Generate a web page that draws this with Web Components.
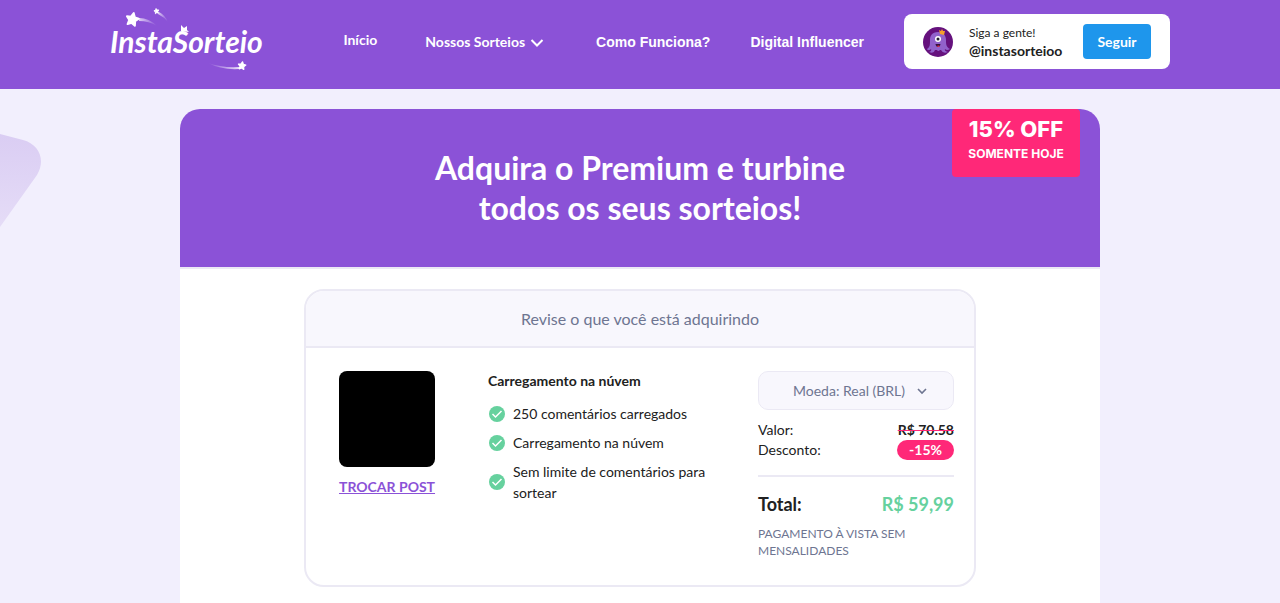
<!DOCTYPE html>
<html lang="pt-BR">
<head>
<meta charset="utf-8">
<meta name="viewport" content="width=device-width, initial-scale=1">
<title>InstaSorteio</title>
<style>
  body {
    margin: 0;
    background: #f2effd;
    font-family: Lato, sans-serif;
    color: #212121;
    --brand: #8b52d7;
    --pink: #ff2878;
    --green: #66d19e;
    --muted: #6e7591;
    --line: #ebe9f4;
    --soft: #f8f7fd;
  }
</style>
</head>
<body>
<insta-page>
  <site-header slot="header"></site-header>
  <premium-hero>
    <span slot="title">Adquira o Premium e turbine<br>todos os seus sorteios!</span>
    <offer-badge slot="badge"><span slot="value">15% OFF</span><span slot="note">SOMENTE HOJE</span></offer-badge>
  </premium-hero>
  <review-card>
    <span slot="title">Revise o que você está adquirindo</span>
    <post-thumb slot="content"></post-thumb>
    <feature-list slot="content">
      <span slot="title">Carregamento na núvem</span>
      <feature-item>250 comentários carregados</feature-item>
      <feature-item>Carregamento na núvem</feature-item>
      <feature-item>Sem limite de comentários para sortear</feature-item>
    </feature-list>
    <price-summary slot="content"></price-summary>
  </review-card>
</insta-page>

<script>
const define = (name, html) => customElements.define(name, class extends HTMLElement {
  constructor() {
    super();
    const template = document.createElement('template');
    template.innerHTML = html;
    this.attachShadow({ mode: 'open' }).append(template.content.cloneNode(true));
  }
});

define('insta-page', `
  <style>
    :host { display: block; position: relative; overflow: hidden; }
    .shape { position: absolute; left: 0; top: 130px; }
    main { position: relative; max-width: 920px; margin: 20px auto 0; background: #fff; border-radius: 20px 20px 0 0; padding-bottom: 32px; }
  </style>
  <slot name="header"></slot>
  <svg class="shape" width="44" height="100" viewBox="0 0 44 100" aria-hidden="true">
    <defs><linearGradient id="g" x1="0" y1="0" x2="0" y2="1"><stop stop-color="#dacdf3"/><stop offset="1" stop-color="#e5dcf7"/></linearGradient></defs>
    <path d="M0 4 L23 10 C39 14 46 30 37 45 L0 97Z" fill="url(#g)"/>
  </svg>
  <main><slot></slot></main>`);

define('site-header', `
  <style>
    :host { display: block; background: var(--brand); color: #fff; }
    header { max-width: 1060px; margin: 0 auto; padding: 14px 0 20px; display: flex; align-items: center; justify-content: space-between; }
    nav { flex: none; display: flex; align-items: center; gap: 40px; }
    a { color: inherit; text-decoration: none; font-size: 14px; line-height: 20px; font-weight: 700; white-space: nowrap; }
    .home { margin-right: 8px; padding-bottom: 4px; }
    .menu { margin-right: 12px; display: flex; align-items: center; gap: 5px; }
    .plain { font-family: "Liberation Sans", Arial, sans-serif; }
  </style>
  <header>
    <brand-logo></brand-logo>
    <nav>
      <a class="home" href="#">Início</a>
      <a class="menu" href="#">Nossos Sorteios
        <svg width="14" height="14" viewBox="0 0 14 14" fill="none" stroke="currentColor" stroke-width="2" aria-hidden="true"><path d="M1.500 5 7 10.500 12.500 5"/></svg></a>
      <a class="plain" href="#">Como Funciona?</a>
      <a class="plain" href="#">Digital Influencer</a>
      <follow-card></follow-card>
    </nav>
  </header>`);

define('brand-logo', `
  <style>
    :host { display: block; }
    a { display: grid; color: #fff; text-decoration: none; width: 152px; }
    svg, span { grid-area: 1 / 1; align-self: center; }
    span { font-size: 30px; line-height: 32px; padding-bottom: 2px; font-weight: 700; font-style: italic; }
    svg { overflow: visible; }
  </style>
  <a href="#">
    <svg width="152" height="55" viewBox="110 14 152 55" fill="#fff" aria-hidden="true">
      <defs>
        <linearGradient id="a" x1="0" x2="1"><stop stop-color="#fff" stop-opacity=".7"/><stop offset="1" stop-color="#fff" stop-opacity="0"/></linearGradient>
        <linearGradient id="b" x1="0" x2="1"><stop stop-color="#fff" stop-opacity="0"/><stop offset="1" stop-color="#fff" stop-opacity=".8"/></linearGradient>
        <path id="star" stroke="#fff" stroke-width="2" stroke-linejoin="round" d="M0-6 2-2 6-1.500 3 1.500 3.700 6 0 4-3.700 6-3 1.500-6-1.500-2-2Z"/>
      </defs>
      <path d="M139 18Q149 18 157 26Q149 21 139 21Z" fill="url(#a)"/>
      <path d="M159 12Q165 15 168 22Q164 17 158 14Z" fill="url(#a)"/>
      <path d="M208 63Q222 68 239 67L239 69Q221 70 208 63Z" fill="url(#b)"/>
      <use href="#star" transform="translate(132.500 19) rotate(12)"/>
      <use href="#star" transform="translate(156.500 11) rotate(-10) scale(.42)"/>
      <use href="#star" transform="translate(242 65.500) rotate(8) scale(.62)"/>
      <path d="M181 25 184 28 187 26 187 30 189 32 181 31Z"/>
    </svg>
    <span>InstaSorteio</span>
  </a>`);

define('follow-card', `
  <style>
    :host { display: flex; align-items: center; box-sizing: border-box; width: 266px; padding: 10px 19px; background: #fff; color: #212121; border-radius: 8px; }
    .who { margin-left: 16px; flex: 1; display: grid; }
    small { font-size: 12px; line-height: 18px; }
    b { font-size: 14px; line-height: 17px; }
    button { width: 68px; height: 35px; padding: 0; border: 0; border-radius: 4px; background: #1e96ec; color: #fff; font: 700 14px/20px Lato, sans-serif; }
  </style>
  <svg width="30" height="30" viewBox="0 0 30 30" aria-hidden="true">
    <circle cx="15" cy="15" r="15" fill="#65117d"/>
    <path d="M15 5C9 5 7 9 7 13C7 18 7 20 4 22C5 24 7 23 8 22Q9 24 6 25Q11 27 12 23L14 23Q15 25 17 23L18 23Q20 27 25 25Q21 24 22 22Q24 24 27 22C23 20 23 17 23 13C23 8 20 5 15 5Z" fill="#9162cb"/>
    <circle cx="15" cy="12" r="3" fill="#fff"/><circle cx="15" cy="12" r="1.500" fill="#223"/>
    <path d="M12.500 17H17.500Q17 20 15 20Q13 20 12.500 17Z" fill="#37113e"/><path d="M14 19Q15 18 17 19Q15 21 14 19Z" fill="#e43148"/>
    <path d="M16 3 18 4 19 2 20 4 22 4 21 8 17 7Z" fill="#f5a12c"/>
  </svg>
  <div class="who"><small>Siga a gente!</small><b>@instasorteioo</b></div>
  <button type="button">Seguir</button>`);

define('premium-hero', `
  <style>
    :host { display: block; position: relative; background: var(--brand); color: #fff; border-radius: 20px 20px 0 0; border-bottom: 2px solid var(--line); padding: 39px 20px; background-clip: padding-box; }
    h1 { margin: 0; text-align: center; font-size: 32px; line-height: 40px; font-weight: 700; }
    slot[name=badge]::slotted(*) { position: absolute; top: 0; right: 20px; }
  </style>
  <h1><slot name="title"></slot></h1>
  <slot name="badge"></slot>`);

define('offer-badge', `
  <style>
    :host { display: block; box-sizing: border-box; min-width: 128px; padding: 8px 16px 11px; text-align: center; background: var(--pink); border-radius: 4px; font-family: Inter, sans-serif; }
    .value { font-size: 22px; line-height: 24px; font-weight: 800; }
    .note { font-size: 12px; line-height: 25px; font-weight: 700; }
  </style>
  <div class="value"><slot name="value"></slot></div>
  <div class="note"><slot name="note"></slot></div>`);

define('review-card', `
  <style>
    :host { display: block; box-sizing: border-box; max-width: 672px; margin: 20px auto 0; border: 2px solid var(--line); border-radius: 20px; overflow: hidden; }
    h2 { margin: 0; padding: 16px; text-align: center; background: var(--soft); border-bottom: 2px solid var(--line); color: var(--muted); font-size: 16px; line-height: 23px; font-weight: 400; }
    .body { display: grid; grid-template-columns: 109px 1fr 196px; column-gap: 40px; align-items: start; padding: 23px 20px 26px 33px; }
  </style>
  <h2><slot name="title"></slot></h2>
  <div class="body"><slot name="content"></slot></div>`);

define('post-thumb', `
  <style>
    :host { display: block; width: 96px; }
    .picture { aspect-ratio: 1; border-radius: 8px; background: #000; }
    a { display: block; margin-top: 10px; text-align: center; white-space: nowrap; color: var(--brand); font-size: 14px; line-height: 20px; font-weight: 700; }
  </style>
  <div class="picture"></div>
  <a href="#">TROCAR POST</a>`);

define('feature-list', `
  <style>
    :host { display: block; }
    h3 { margin: 0 0 12px; font-size: 14px; line-height: 20px; font-weight: 700; }
    .items { display: grid; gap: 8px; }
  </style>
  <h3><slot name="title"></slot></h3>
  <div class="items" role="list"><slot></slot></div>`);

define('feature-item', `
  <style>
    :host { display: flex; align-items: center; gap: 7px; font-size: 14px; line-height: 21px; }
    svg { flex: none; }
  </style>
  <svg width="18" height="18" viewBox="0 0 18 18" fill="none" aria-hidden="true"><circle cx="9" cy="9" r="8" fill="var(--green)"/><path d="M4.500 9 7.500 12 13.500 6" stroke="#fff" stroke-width="1.500"/></svg>
  <span role="listitem"><slot></slot></span>`);

define('price-summary', `
  <style>
    :host { display: block; font-size: 14px; line-height: 20px; }
    label { display: grid; align-items: center; margin-bottom: 10px; color: var(--muted); }
    select, svg { grid-area: 1 / 1; }
    select { appearance: none; width: 100%; height: 39px; margin: 0; padding: 0 30px 0 16px; text-align: center; text-align-last: center; color: inherit; background: var(--soft); border: 1px solid var(--line); border-radius: 10px; font: 400 14px/20px Lato, sans-serif; }
    svg { justify-self: end; margin-right: 26px; pointer-events: none; }
    dl { margin: 0; }
    dl div { display: flex; justify-content: space-between; align-items: center; }
    dd { margin: 0; font-weight: 700; }
    s { text-decoration: line-through 1px var(--pink); }
    .off { padding: 0 12px; border-radius: 10px; background: var(--pink); color: #fff; }
    .total { margin-top: 15px; padding-top: 15px; border-top: 2px solid var(--line); font-size: 18px; line-height: 24px; font-weight: 700; }
    .total dd { color: var(--green); }
    p { margin: 9px 0 0; color: var(--muted); font-size: 12px; line-height: 17px; }
  </style>
  <label>
    <select aria-label="Moeda"><option>Moeda: Real (BRL)</option></select>
    <svg width="12" height="12" viewBox="0 0 12 12" fill="none" stroke="currentColor" stroke-width="1.600" aria-hidden="true"><path d="M2 4 6 8 10 4"/></svg>
  </label>
  <dl>
    <div><dt>Valor:</dt><dd><s>R$ 70.58</s></dd></div>
    <div><dt>Desconto:</dt><dd class="off">-15%</dd></div>
    <div class="total"><dt>Total:</dt><dd>R$ 59,99</dd></div>
  </dl>
  <p>PAGAMENTO À VISTA SEM MENSALIDADES</p>`);
</script>
</body>
</html>
